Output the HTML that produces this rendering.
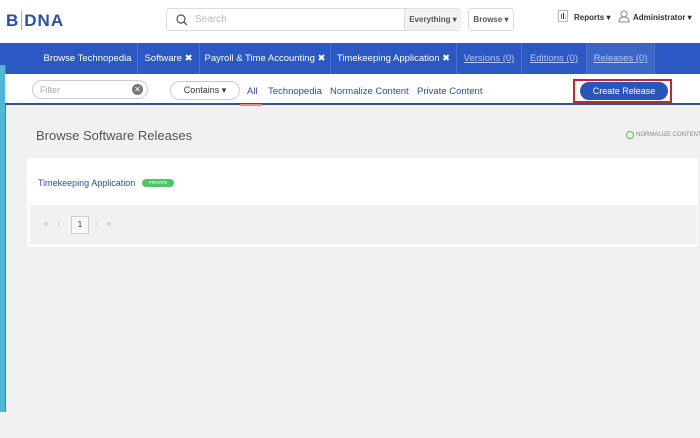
<!DOCTYPE html>
<html><head><meta charset="utf-8"><style>
*{margin:0;padding:0;box-sizing:border-box}
body{width:700px;height:438px;background:#f1f1f1;font-family:"Liberation Sans",sans-serif;position:relative;overflow:hidden;white-space:nowrap}
.abs{position:absolute}
.top{left:0;top:0;width:700px;height:43px;background:#fff}
.logo{left:6px;top:11px;font-weight:bold;font-size:17px;color:#2a4fa8;letter-spacing:1px}
.search{left:166px;top:8px;width:295px;height:23px;border:1px solid #ddd;border-radius:3px;background:#fff}
.nav{left:0;top:43px;width:700px;height:31px;background:#2b58c2;color:#fff;font-size:9.5px}
.nav div{position:absolute;top:0;height:31px;line-height:31px;border-right:1px solid #4a72cf;text-align:center;white-space:nowrap}
.nav u{color:#b8c9ef}
.sub{left:5px;top:74px;width:695px;height:31px;background:#fff;border-bottom:2px solid #3a4f8e}
.link{font-size:9.5px;color:#2d4f96;top:86px}
</style></head><body>
<div class="abs top"></div>
<div class="abs logo">B<span style="border-left:1px solid #aac;margin:0 2px"></span>DNA</div>
<div class="abs search">
 <svg class="abs" style="left:9px;top:5px" width="12" height="12"><circle cx="5" cy="5" r="4" fill="none" stroke="#555" stroke-width="1.2"/><line x1="8" y1="8" x2="11" y2="11" stroke="#555" stroke-width="1.3"/></svg>
 <span class="abs" style="left:28px;top:5px;font-size:10px;color:#bbb">Search</span>
 <div class="abs" style="left:237px;top:0;width:57px;height:21px;background:#f2f2f2;border-left:1px solid #ddd;font-size:8px;font-weight:bold;color:#555;line-height:21px;text-align:center">Everything ▾</div>
</div>
<div class="abs" style="left:468px;top:8px;width:46px;height:23px;border:1px solid #ddd;border-radius:3px;font-size:8px;font-weight:bold;color:#555;line-height:21px;text-align:center">Browse ▾</div>
<div class="abs" style="left:558px;top:10px;width:10px;height:12px;border:1px solid #bbb;background:#fff"></div>
<div class="abs" style="left:561px;top:14px;width:1px;height:5px;background:#d33"></div>
<div class="abs" style="left:563px;top:13px;width:1px;height:6px;background:#336"></div>
<div class="abs" style="left:565px;top:15px;width:1px;height:4px;background:#fc0"></div>
<div class="abs" style="left:574px;top:13px;font-size:8px;font-weight:bold;color:#333">Reports ▾</div>
<svg class="abs" style="left:618px;top:10px" width="12" height="13"><circle cx="6" cy="4" r="3" fill="none" stroke="#888"/><path d="M1 12 Q1 7 6 7 Q11 7 11 12 Z" fill="none" stroke="#888"/></svg>
<div class="abs" style="left:633px;top:13px;font-size:8px;font-weight:bold;color:#333">Administrator ▾</div>
<div class="abs nav">
 <div style="left:38px;width:100px">Browse Technopedia</div>
 <div style="left:138px;width:62px">Software ✖</div>
 <div style="left:200px;width:131px">Payroll &amp; Time Accounting ✖</div>
 <div style="left:331px;width:126px">Timekeeping Application ✖</div>
 <div style="left:457px;width:65px"><u>Versions (0)</u></div>
 <div style="left:522px;width:65px"><u>Editions (0)</u></div>
 <div style="left:587px;width:68px;background:#3a66c8"><u>Releases (0)</u></div>
</div>
<div class="abs" style="left:0;top:65px;width:6px;height:347px;background:#4fb6d8;border-right:1px solid #2a8fb0"></div>
<div class="abs sub"></div>
<div class="abs" style="left:32px;top:80px;width:116px;height:19px;border:1px solid #ccc;border-radius:10px;background:#fff">
 <span class="abs" style="left:7px;top:4px;font-size:9px;color:#aaa">Filter</span>
 <div class="abs" style="left:99px;top:3px;width:11px;height:11px;border-radius:50%;background:#777;color:#fff;font-size:8px;line-height:11px;text-align:center">✕</div>
</div>
<div class="abs" style="left:170px;top:81px;width:70px;height:19px;border:1px solid #ccc;border-radius:10px;font-size:9px;color:#333;line-height:17px;text-align:center">Contains ▾</div>
<div class="abs link" style="left:247px">All</div>
<div class="abs" style="left:240px;top:104px;width:22px;height:2px;background:#e88"></div>
<div class="abs link" style="left:268px">Technopedia</div>
<div class="abs link" style="left:330px">Normalize Content</div>
<div class="abs link" style="left:417px">Private Content</div>
<div class="abs" style="left:573px;top:79px;width:99px;height:24px;border:2px solid #c0282e"></div>
<div class="abs" style="left:580px;top:82px;width:88px;height:18px;border-radius:9px;background:#2b55b8;color:#fff;font-size:9px;line-height:18px;text-align:center">Create Release</div>
<div class="abs" style="left:36px;top:128px;font-size:13px;color:#555">Browse Software Releases</div>
<div class="abs" style="left:626px;top:131px;width:8px;height:8px;border-radius:50%;border:1.5px solid #4c4;"></div>
<div class="abs" style="left:636px;top:132px;font-size:6px;color:#888">NORMALIZE CONTENT</div>
<div class="abs" style="left:27px;top:158px;width:671px;height:89px;background:#fff;border-radius:3px"></div>
<div class="abs" style="left:38px;top:178px;font-size:9px;color:#2d4f96">Timekeeping Application</div>
<div class="abs" style="left:142px;top:179px;width:32px;height:8px;border-radius:4px;background:#4cc565;color:#fff;font-size:4.5px;line-height:8px;text-align:center">PRIVATE</div>
<div class="abs" style="left:30px;top:205px;width:667px;height:39px;background:#f1f1f1"></div>
<div class="abs" style="left:44px;top:221px;font-size:7px;color:#999">«&nbsp;&nbsp;&nbsp;&nbsp;&nbsp;‹</div>
<div class="abs" style="left:71px;top:216px;width:18px;height:18px;border:1px solid #ccc;background:#f7f7f7;font-size:8px;line-height:16px;text-align:center;color:#333">1</div>
<div class="abs" style="left:95px;top:221px;font-size:7px;color:#999">›&nbsp;&nbsp;&nbsp;&nbsp;&nbsp;»</div>
</body></html>
